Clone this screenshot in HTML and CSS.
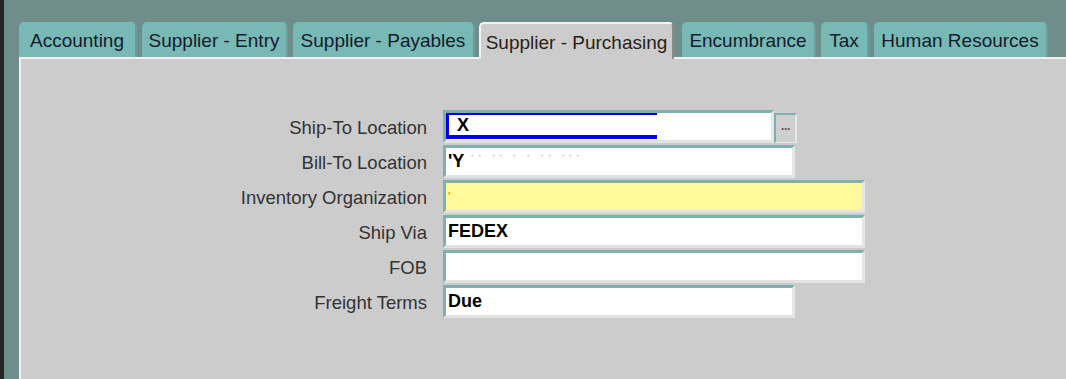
FILE: index.html
```html
<!DOCTYPE html>
<html>
<head>
<meta charset="utf-8">
<link rel="stylesheet" href="styles.css">
</head>
<body>
<div class="app">
  <div class="edge"></div>
  <div class="main">
    <div class="tabs">
      <div class="tab w1">Accounting</div>
      <div class="tab w2">Supplier - Entry</div>
      <div class="tab w3">Supplier - Payables</div>
      <div class="tab w4 active">Supplier - Purchasing</div>
      <div class="tab w5">Encumbrance</div>
      <div class="tab w6">Tax</div>
      <div class="tab w7">Human Resources</div>
    </div>
    <div class="panel">
      <div class="form">
        <div class="label">Ship-To Location</div>
        <div class="fieldwrap">
          <div class="field short">
            <div class="sel">X</div>
          </div>
          <div class="lov"><span class="dots">···</span></div>
        </div>

        <div class="label">Bill-To Location</div>
        <div class="field medium"><span class="val">'Y</span><span class="blur">˙˙ ˙˙ ˙ ˙ ˙˙ ˙˙˙</span></div>

        <div class="label">Inventory Organization</div>
        <div class="field long req"><span class="tick">'</span></div>

        <div class="label">Ship Via</div>
        <div class="field long"><span class="val">FEDEX</span></div>

        <div class="label">FOB</div>
        <div class="field long"></div>

        <div class="label">Freight Terms</div>
        <div class="field medium"><span class="val">Due</span></div>
      </div>
    </div>
  </div>
</div>
</body>
</html>
```
FILE: styles.css
```css
html, body {
  margin: 0;
  padding: 0;
  height: 100%;
}
body {
  background: #6f8d8a;
  font-family: "Liberation Sans", Arial, sans-serif;
  overflow: hidden;
}
.app {
  display: flex;
  height: 379px;
}
.edge {
  width: 4px;
  background: #262626;
  flex: none;
}
.main {
  flex: 1;
  padding: 22px 0 0 15px;
  display: flex;
  flex-direction: column;
}
.tabs {
  display: flex;
  height: 35px;
  align-items: stretch;
}
.tab {
  box-sizing: border-box;
  background: #78b8b5;
  border-radius: 5px 5px 0 0;
  border-right: 2px solid #6a9e9b;
  color: #141c2c;
  font-size: 19px;
  display: flex;
  align-items: center;
  justify-content: center;
  padding-top: 2px;
  margin-right: 5px;
  white-space: nowrap;
}
.w1 { width: 118px; }
.w2 { width: 146px; }
.w3 { width: 182px; margin-right: 4px; }
.w4 { width: 195px; margin-right: 8px; }
.w5 { width: 134px; }
.w6 { width: 48px; }
.w7 { width: 174px; }
.tab.active {
  background: #cccccc;
  border-top: 2px solid #f2f2f2;
  border-left: 2px solid #f2f2f2;
  border-right: 2px solid #8a8a8a;
  height: 37px;
  margin-bottom: -2px;
  position: relative;
  z-index: 2;
  color: #2a1e14;
}
.panel {
  flex: 1;
  background: #cccccc;
  border-top: 2px solid #f2f2f2;
  border-left: 2px solid #f2f2f2;
  padding-top: 51px;
}
.form {
  display: grid;
  grid-template-columns: 406px auto;
  column-gap: 16px;
  row-gap: 2px;
  align-items: center;
  justify-items: start;
  grid-auto-rows: 33px;
}
.label {
  justify-self: end;
  font-size: 18.5px;
  color: #333333;
  padding-top: 2px;
}
.fieldwrap {
  display: flex;
  align-items: flex-end;
  height: 33px;
}
.field {
  box-sizing: border-box;
  height: 33px;
  background: #ffffff;
  border-top: 3px solid #7eb0ad;
  border-left: 3px solid #7eb0ad;
  border-right: 3px solid #e6e6e6;
  border-bottom: 3px solid #e2e2e2;
  font-size: 18px;
  font-weight: bold;
  color: #000;
  display: flex;
  align-items: center;
  padding-left: 2px;
  overflow: hidden;
  white-space: nowrap;
}
.short { width: 331px; padding-left: 0; align-items: stretch; }
.medium { width: 352px; }
.long { width: 422px; }
.req { background: #fff99b; }
.sel {
  width: 211px;
  box-sizing: border-box;
  border-top: 2px solid #0000ee;
  border-left: 3px solid #0000ee;
  border-bottom: 4px solid #0000ee;
  padding-left: 8px;
  margin-bottom: 1px;
  display: flex;
  align-items: center;
}
.lov {
  box-sizing: border-box;
  width: 23px;
  height: 30px;
  background: #cfcfcf;
  border-left: 2px solid #7eb0ad;
  border-top: 2px solid #7eb0ad;
  border-right: 2px solid #e6e6e6;
  border-bottom: 1px solid #e6e6e6;
  display: flex;
  align-items: center;
  justify-content: center;
}
.dots {
  font-size: 12px;
  font-weight: bold;
  color: #6b4a4a;
  letter-spacing: -1px;
}
.blur {
  color: #b8b8c8;
  font-weight: normal;
  font-size: 16px;
  margin-left: 6px;
  letter-spacing: 2px;
}
.tick {
  color: #b08a30;
  font-weight: normal;
  font-size: 12px;
}
```
